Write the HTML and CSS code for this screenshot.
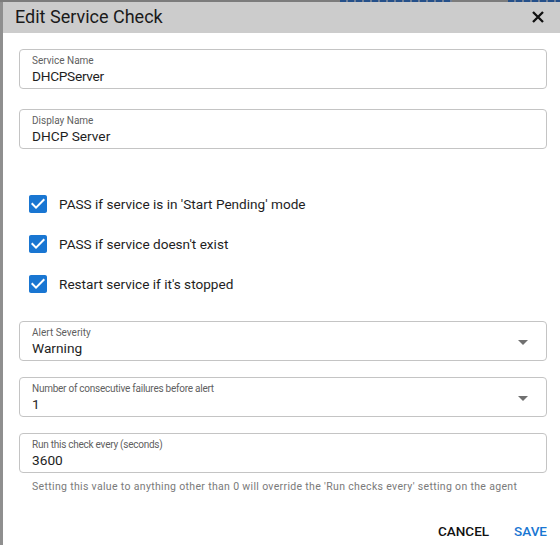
FILE: index.html
```html
<!DOCTYPE html>
<html lang="en">
<head>
<meta charset="utf-8">
<title>Edit Service Check</title>
<link rel="stylesheet" href="styles.css">
</head>
<body>
<div class="topstrip">
  <span class="frag frag-a"></span>
  <span class="frag frag-b"></span>
</div>
<div class="dialog">
  <div class="dialog-header">
    <h2 class="dialog-title">Edit Service Check</h2>
    <svg class="close-icon" width="12" height="12" viewBox="0 0 12 12" aria-label="Close">
      <path d="M1 1L11 11M11 1L1 11" stroke="#111" stroke-width="2.3" fill="none"/>
    </svg>
  </div>
  <div class="dialog-content">
    <div class="field">
      <div class="field-body">
        <div class="field-label">Service Name</div>
        <div class="field-value tight">DHCPServer</div>
      </div>
    </div>
    <div class="field field-gap-lg">
      <div class="field-body">
        <div class="field-label">Display Name</div>
        <div class="field-value">DHCP Server</div>
      </div>
    </div>

    <div class="checks">
      <div class="check-row">
        <svg class="check-icon" width="24" height="24" viewBox="0 0 24 24"><path fill="#1976d2" d="M19 3H5c-1.11 0-2 .9-2 2v14c0 1.1.89 2 2 2h14c1.11 0 2-.9 2-2V5c0-1.1-.89-2-2-2zm-9 14l-5-5 1.41-1.41L10 14.17l7.59-7.59L19 8l-9 9z"/></svg>
        <span class="check-label">PASS if service is in 'Start Pending' mode</span>
      </div>
      <div class="check-row">
        <svg class="check-icon" width="24" height="24" viewBox="0 0 24 24"><path fill="#1976d2" d="M19 3H5c-1.11 0-2 .9-2 2v14c0 1.1.89 2 2 2h14c1.11 0 2-.9 2-2V5c0-1.1-.89-2-2-2zm-9 14l-5-5 1.41-1.41L10 14.17l7.59-7.59L19 8l-9 9z"/></svg>
        <span class="check-label">PASS if service doesn't exist</span>
      </div>
      <div class="check-row">
        <svg class="check-icon" width="24" height="24" viewBox="0 0 24 24"><path fill="#1976d2" d="M19 3H5c-1.11 0-2 .9-2 2v14c0 1.1.89 2 2 2h14c1.11 0 2-.9 2-2V5c0-1.1-.89-2-2-2zm-9 14l-5-5 1.41-1.41L10 14.17l7.59-7.59L19 8l-9 9z"/></svg>
        <span class="check-label">Restart service if it's stopped</span>
      </div>
    </div>

    <div class="field select">
      <div class="field-body">
        <div class="field-label">Alert Severity</div>
        <div class="field-value">Warning</div>
      </div>
      <svg class="arrow" width="24" height="24" viewBox="0 0 24 24"><path d="M7 10l5 5 5-5z" fill="#707070"/></svg>
    </div>
    <div class="field select field-gap">
      <div class="field-body">
        <div class="field-label tight">Number of consecutive failures before alert</div>
        <div class="field-value">1</div>
      </div>
      <svg class="arrow" width="24" height="24" viewBox="0 0 24 24"><path d="M7 10l5 5 5-5z" fill="#707070"/></svg>
    </div>
    <div class="field field-gap">
      <div class="field-body">
        <div class="field-label tight">Run this check every (seconds)</div>
        <div class="field-value">3600</div>
      </div>
    </div>
    <p class="helper">Setting this value to anything other than 0 will override the 'Run checks every' setting on the agent</p>

    <div class="actions">
      <button class="btn btn-cancel">Cancel</button>
      <button class="btn btn-save">Save</button>
    </div>
  </div>
</div>
</body>
</html>
```

FILE: styles.css
```css
html, body {
  margin: 0;
  padding: 0;
}
body {
  width: 560px;
  height: 545px;
  overflow: hidden;
  background: #8f8f8f;
  font-family: Roboto, "Liberation Sans", sans-serif;
}
.topstrip {
  height: 2px;
  display: flex;
  background: #7c7c7c;
}
.frag {
  display: block;
  height: 2px;
  background: repeating-linear-gradient(90deg, #25508a 0 6px, #6f7f96 6px 8px);
}
.frag-a {
  margin-left: 340px;
  width: 112px;
}
.frag-b {
  margin-left: 56px;
  width: 52px;
}
.dialog {
  margin-left: 3px;
  height: 543px;
  background: #ffffff;
  display: flex;
  flex-direction: column;
}
.dialog-header {
  height: 31px;
  flex: 0 0 31px;
  box-sizing: border-box;
  background: #cccccc;
  display: flex;
  align-items: center;
  justify-content: space-between;
  padding: 0 16px 3px 12px;
}
.dialog-title {
  margin: 0;
  font-size: 18px;
  font-weight: 400;
  color: #1a1a1a;
  line-height: 21px;
}
.close-icon {
  display: block;
  margin-top: 1px;
}
.dialog-content {
  padding: 16px 13px 0 16px;
  display: flex;
  flex-direction: column;
}
.field {
  height: 40px;
  flex: 0 0 40px;
  box-sizing: border-box;
  border: 1px solid #c4c4c4;
  border-radius: 4px;
  padding: 5px 12px 0 12px;
  display: flex;
}
.field-gap-lg {
  margin-top: 20px;
}
.field-gap {
  margin-top: 16px;
}
.field-body {
  flex: 1;
  display: flex;
  flex-direction: column;
}
.field-label {
  font-size: 10px;
  line-height: 11px;
  color: #5f5f5f;
}
.field-label.tight {
  letter-spacing: -0.25px;
}
.field-value {
  margin-top: 2px;
  font-size: 13.7px;
  line-height: 16px;
  color: #1e1e1e;
}
.field-value.tight {
  letter-spacing: -0.3px;
}
.select {
  padding-right: 11px;
  align-items: center;
}
.select .field-body {
  align-self: flex-start;
}
.arrow {
  display: block;
  margin-top: -4px;
}
.checks {
  margin-top: 35px;
  margin-bottom: 17px;
  display: flex;
  flex-direction: column;
}
.check-row {
  height: 40px;
  display: flex;
  align-items: center;
  padding-left: 7px;
  gap: 9px;
}
.check-icon {
  display: block;
}
.check-label {
  font-size: 13.6px;
  color: #1e1e1e;
}
.helper {
  margin: 7px 0 0 13px;
  font-size: 10.5px;
  line-height: 14px;
  letter-spacing: 0.33px;
  color: #7a7a7a;
}
.actions {
  margin-top: 19px;
  margin-right: -8px;
  display: flex;
  justify-content: flex-end;
  gap: 9px;
}
.btn {
  background: none;
  border: none;
  padding: 6px 8px;
  font-family: Roboto, "Liberation Sans", sans-serif;
  font-size: 13.5px;
  font-weight: 500;
  line-height: 24px;
  text-transform: uppercase;
  cursor: pointer;
}
.btn-cancel {
  color: #111111;
}
.btn-save {
  color: #1976d2;
}
```
